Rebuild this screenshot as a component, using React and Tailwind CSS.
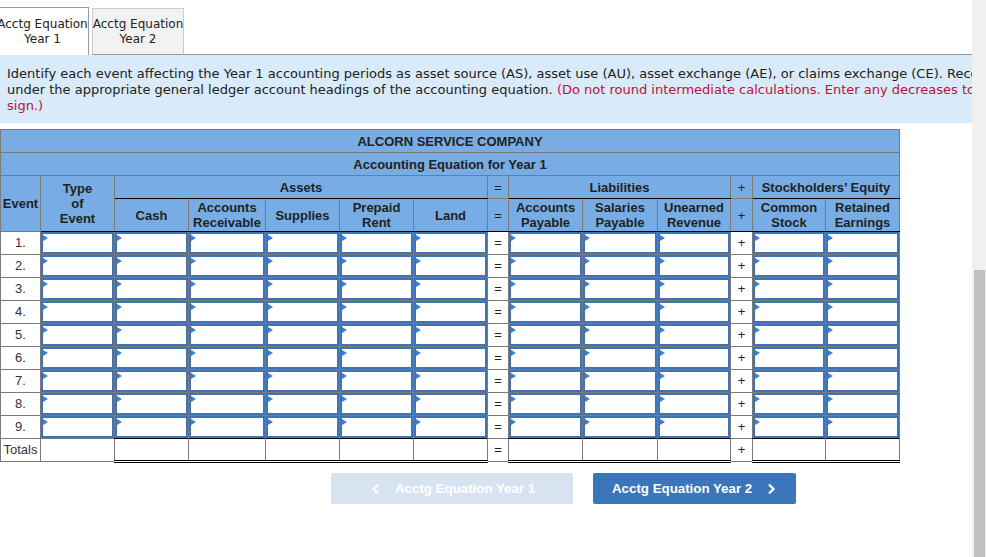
import React from "react";

const cols = [40, 74, 74, 77, 74, 74, 74, 21, 74, 75, 73, 22, 73, 74];
const G = "border border-[#7a7a7a]";

function Tri() {
  return (
    <span className="absolute left-0 top-[1px] w-0 h-0 border-y-[3px] border-y-transparent border-l-[5px] border-l-[#3b7ed6]" />
  );
}

function InputCell() {
  return (
    <td className={`${G} p-0 h-[23px]`}>
      <div className="relative h-[22px] border-2 border-[#3f73b3] bg-white">
        <Tri />
      </div>
    </td>
  );
}

function SignCell({ s }) {
  return (
    <td className={`${G} p-0 h-[23px] text-center text-[13px] text-[#222] bg-white`}>{s}</td>
  );
}

function DataRow({ n }) {
  return (
    <tr>
      <td className={`${G} h-[23px] text-center text-[13px] text-[#333] bg-white p-0`}>{n}.</td>
      <InputCell />
      <InputCell />
      <InputCell />
      <InputCell />
      <InputCell />
      <InputCell />
      <SignCell s="=" />
      <InputCell />
      <InputCell />
      <InputCell />
      <SignCell s="+" />
      <InputCell />
      <InputCell />
    </tr>
  );
}

function TotalCell() {
  return (
    <td className="border border-[#7a7a7a] border-t-black border-b-[3px] border-b-black border-double h-[23px] p-0 bg-white" />
  );
}

export default function App() {
  const H = "bg-[#77ade4] text-[#222] font-bold text-[13px] leading-[15px]";
  return (
    <div className="flex w-[986px] h-[557px] overflow-hidden bg-white">
      <div className="w-[972px] h-full overflow-hidden">
        <div className="w-[972px] overflow-hidden font-['DejaVu_Sans',Verdana,sans-serif] text-[13px]">
          {/* tabs */}
          <div className="flex pt-[7px] items-end text-[12px]">
            <div className="-ml-[4px] w-[93px] h-[48px] border border-[#999] border-b-0 bg-white flex flex-col items-center leading-[15px] pt-[9px] text-[#222] whitespace-nowrap">
              <span>Acctg Equation</span>
              <span>Year 1</span>
            </div>
            <div className="ml-[3px] w-[92px] h-[47px] border border-[#ccc] border-b-[#999] bg-[#f2f2f2] flex flex-col items-center leading-[15px] pt-[8px] text-[#222] whitespace-nowrap">
              <span>Acctg Equation</span>
              <span>Year 2</span>
            </div>
            <div className="flex-1 border-b border-[#999]" />
          </div>
          {/* info box */}
          <div className="bg-[#d9eaf8] h-[68px] pl-[7px] pt-[11px] leading-[16px] text-[#222] whitespace-nowrap">
            <div>
              Identify each event affecting the Year 1 accounting periods as asset source (AS), asset use (AU), asset exchange (AE), or claims exchange (CE). Record the effect of each event
            </div>
            <div>
              under the appropriate general ledger account headings of the accounting equation.{" "}
              <span className="text-[#c2103a]">(Do not round intermediate calculations. Enter any decreases to account balances with a minus</span>
            </div>
            <div className="text-[#c2103a]">sign.)</div>
          </div>
        </div>

        {/* table */}
        <div className="mt-[6px] font-['Liberation_Sans',Arial,sans-serif]">
          <table className="border-collapse table-fixed w-[900px]">
            <colgroup>
              {cols.map((w, i) => (
                <col key={i} style={{ width: w }} />
              ))}
            </colgroup>
            <thead>
              <tr>
                <th colSpan={14} className={`${H} ${G} h-[23px] p-0`}>ALCORN SERVICE COMPANY</th>
              </tr>
              <tr>
                <th colSpan={14} className={`${H} ${G} h-[23px] p-0`}>Accounting Equation for Year 1</th>
              </tr>
              <tr>
                <th rowSpan={2} className={`${H} ${G} border-b-[#7a7a7a] p-0`}>Event</th>
                <th rowSpan={2} className={`${H} ${G} border-b-black p-0`}>Type<br />of<br />Event</th>
                <th colSpan={5} className={`${H} ${G} border-b-black h-[23px] p-0`}>Assets</th>
                <th className={`${H} ${G} p-0 font-normal`}>=</th>
                <th colSpan={3} className={`${H} ${G} border-b-black p-0`}>Liabilities</th>
                <th className={`${H} ${G} p-0 font-normal`}>+</th>
                <th colSpan={2} className={`${H} ${G} border-b-black p-0`}>Stockholders’ Equity</th>
              </tr>
              <tr>
                {[
                  "Cash",
                  ["Accounts", "Receivable"],
                  "Supplies",
                  ["Prepaid", "Rent"],
                  "Land",
                  "=",
                  ["Accounts", "Payable"],
                  ["Salaries", "Payable"],
                  ["Unearned", "Revenue"],
                  "+",
                  ["Common", "Stock"],
                  ["Retained", "Earnings"],
                ].map((t, i) => (
                  <th
                    key={i}
                    className={`${H} ${G} border-b-black h-[33px] p-0 ${t === "=" || t === "+" ? "font-normal" : ""}`}
                  >
                    {Array.isArray(t) ? (
                      <>
                        {t[0]}
                        <br />
                        {t[1]}
                      </>
                    ) : (
                      t
                    )}
                  </th>
                ))}
              </tr>
            </thead>
            <tbody>
              {[1, 2, 3, 4, 5, 6, 7, 8, 9].map((n) => (
                <DataRow key={n} n={n} />
              ))}
              <tr>
                <td className={`${G} h-[23px] text-center text-[13px] text-[#333] bg-white p-0`}>Totals</td>
                <td className={`${G} h-[23px] p-0 bg-white`} />
                <TotalCell />
                <TotalCell />
                <TotalCell />
                <TotalCell />
                <TotalCell />
                <SignCell s="=" />
                <TotalCell />
                <TotalCell />
                <TotalCell />
                <SignCell s="+" />
                <TotalCell />
                <TotalCell />
              </tr>
            </tbody>
          </table>

          {/* buttons */}
          <div className="flex mt-[10px] ml-[331px] gap-[20px]">
            <button className="flex items-center w-[242px] h-[31px] pl-[40px] rounded-[2px] bg-[#d7e3f1] text-white font-bold text-[13.3px]">
              <svg width="10" height="12" viewBox="0 0 10 12" className="mr-[14px]">
                <path d="M7 1.5 L2.5 6 L7 10.5" stroke="white" strokeWidth="2.2" fill="none" />
              </svg>
              Acctg Equation Year 1
            </button>
            <button className="flex items-center w-[203px] h-[31px] pl-[19px] rounded-[2px] bg-[#3a76b9] text-white font-bold text-[13.3px]">
              Acctg Equation Year 2
              <svg width="10" height="12" viewBox="0 0 10 12" className="ml-[14px]">
                <path d="M3 1.5 L7.5 6 L3 10.5" stroke="white" strokeWidth="2.2" fill="none" />
              </svg>
            </button>
          </div>
        </div>
      </div>
      {/* scrollbar */}
      <div className="w-[14px] h-full bg-[#f0f0f0] flex flex-col">
        <div className="h-[270px]" />
        <div className="flex-1 ml-[2px] w-[11px] bg-[#c1c1c1]" />
      </div>
    </div>
  );
}
